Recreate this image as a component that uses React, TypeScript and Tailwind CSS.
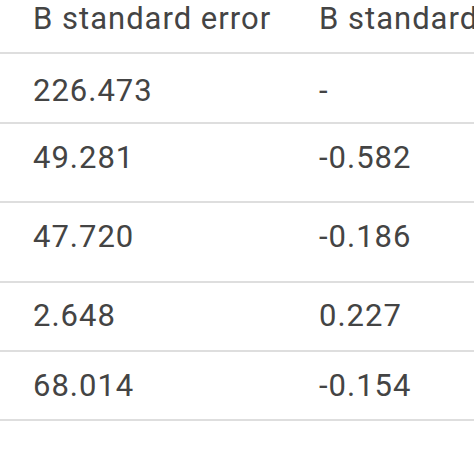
const rows = [
  { a: '226.473', b: '-', h: 'h-[70px]', pt: 'pt-[19px]' },
  { a: '49.281', b: '-0.582', h: 'h-[79px]', pt: 'pt-[16px]' },
  { a: '47.720', b: '-0.186', h: 'h-[80px]', pt: 'pt-[16px]' },
  { a: '2.648', b: '0.227', h: 'h-[69px]', pt: 'pt-[15px]' },
  { a: '68.014', b: '-0.154', h: 'h-[69px]', pt: 'pt-[16px]' },
];

export default function App() {
  return (
    <div className="w-[474px] h-[474px] bg-white overflow-hidden font-['Roboto',sans-serif] text-[31px] leading-[36px] tracking-[1px] text-[#444444]">
      {/* header */}
      <div className="grid grid-cols-[286px_1fr] h-[54px] pt-[1px] pl-[33px] border-b-2 border-[#dedede] whitespace-nowrap">
        <span>B standard error</span>
        <span className="overflow-hidden">B standard error</span>
      </div>
      {rows.map((r) => (
        <div
          key={r.a}
          className={`grid grid-cols-[286px_1fr] pl-[33px] border-b-2 border-[#dedede] ${r.h} ${r.pt}`}
        >
          <span>{r.a}</span>
          <span>{r.b}</span>
        </div>
      ))}
    </div>
  );
}
